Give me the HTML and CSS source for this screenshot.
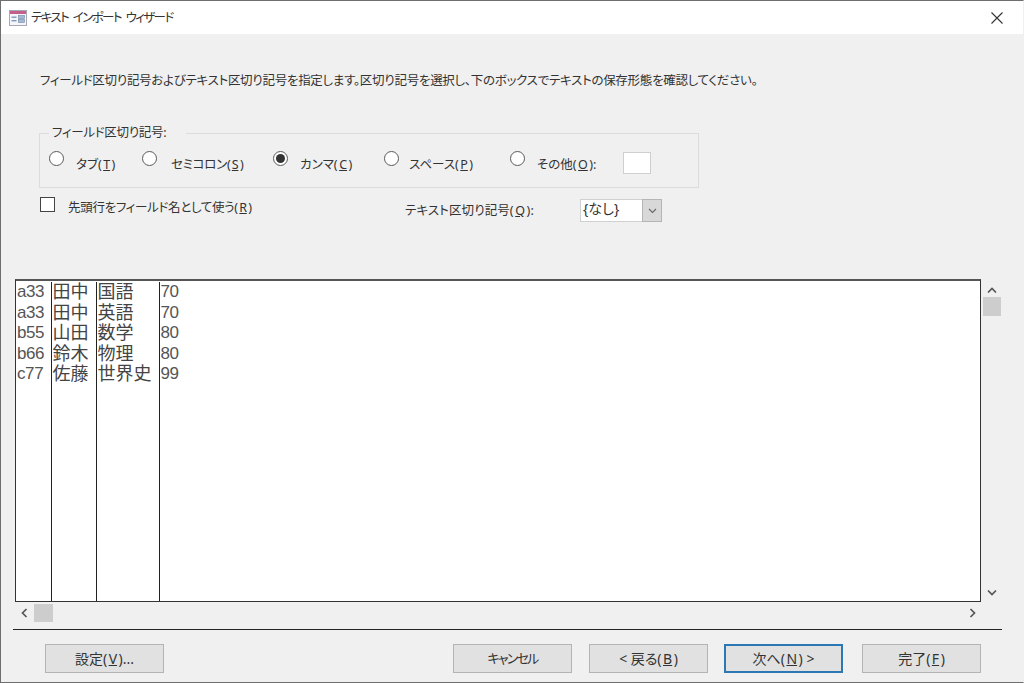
FILE: index.html
```html
<!DOCTYPE html>
<html lang="ja">
<head>
<meta charset="utf-8">
<title>テキスト インポート ウィザード</title>
<link rel="stylesheet" href="styles.css">
</head>
<body>
<div class="window">
  <header class="titlebar">
    <svg class="app-icon" width="18" height="16" viewBox="0 0 18 16">
      <rect x="0.5" y="0.5" width="17" height="15" fill="#f4f6fa" stroke="#a8a8b4"/>
      <rect x="1" y="1" width="16" height="3" fill="#c4608c"/>
      <rect x="2.5" y="6.5" width="5" height="1.4" fill="#7f9ab8"/>
      <rect x="2.5" y="10" width="5" height="1.4" fill="#7f9ab8"/>
      <rect x="9.5" y="5.5" width="6" height="3" fill="#a4bad4" stroke="#6f8aa8" stroke-width="0.6"/>
      <rect x="9.5" y="9.5" width="6" height="3" fill="#a4bad4" stroke="#6f8aa8" stroke-width="0.6"/>
    </svg>
    <span class="title">テキスト インポート ウィザード</span>
    <svg class="close" width="12" height="12" viewBox="0 0 12 12"><path d="M0.5 0.5L11.5 11.5M11.5 0.5L0.5 11.5" stroke="#333" stroke-width="1.1" fill="none"/></svg>
  </header>

  <main class="body">
    <p class="intro">フィールド区切り記号およびテキスト区切り記号を指定します。区切り記号を選択し、下のボックスでテキストの保存形態を確認してください。</p>

    <fieldset class="group">
      <legend>フィールド区切り記号:</legend>
      <div class="radios">
        <div class="radio-item"><span class="radio"></span><span class="label">タブ(<u>T</u>)</span></div>
        <div class="radio-item wide"><span class="radio"></span><span class="label narrow">セミコロン(<u>S</u>)</span></div>
        <div class="radio-item"><span class="radio on"></span><span class="label">カンマ(<u>C</u>)</span></div>
        <div class="radio-item tight"><span class="radio"></span><span class="label">スペース(<u>P</u>)</span></div>
        <div class="radio-item"><span class="radio"></span><span class="label">その他(<u>O</u>):</span></div>
        <div class="other-box"></div>
      </div>
    </fieldset>

    <div class="options">
      <div class="check-item"><span class="checkbox"></span><span class="label narrow">先頭行をフィールド名として使う(<u>R</u>)</span></div>
      <div class="qualifier">
        <span class="qualifier-label">テキスト区切り記号(<u>Q</u>):</span>
        <div class="combo">
          <span class="combo-value">{なし}</span>
          <span class="combo-btn"><svg width="9" height="6" viewBox="0 0 9 6"><path d="M1 1L4.5 4.5L8 1" stroke="#666" stroke-width="1.1" fill="none"/></svg></span>
        </div>
      </div>
    </div>

    <div class="preview-row">
      <div class="preview">
        <table class="data">
          <tr><td class="c1">a33</td><td class="c2">田中</td><td class="c3">国語</td><td class="c4">70</td></tr>
          <tr><td class="c1">a33</td><td class="c2">田中</td><td class="c3">英語</td><td class="c4">70</td></tr>
          <tr><td class="c1">b55</td><td class="c2">山田</td><td class="c3">数学</td><td class="c4">80</td></tr>
          <tr><td class="c1">b66</td><td class="c2">鈴木</td><td class="c3">物理</td><td class="c4">80</td></tr>
          <tr><td class="c1">c77</td><td class="c2">佐藤</td><td class="c3">世界史</td><td class="c4">99</td></tr>
          <tr class="filler"><td></td><td></td><td></td><td></td></tr>
        </table>
      </div>
      <div class="vscroll">
        <svg class="arrow-up" width="10" height="7" viewBox="0 0 10 7"><path d="M1 5.5L5 1.5L9 5.5" stroke="#555" stroke-width="1.7" fill="none"/></svg>
        <span class="vthumb"></span>
        <svg class="arrow-down" width="10" height="7" viewBox="0 0 10 7"><path d="M1 1.5L5 5.5L9 1.5" stroke="#555" stroke-width="1.7" fill="none"/></svg>
      </div>
    </div>

    <div class="hscroll">
      <svg class="arrow-left" width="7" height="10" viewBox="0 0 7 10"><path d="M5.5 1L1.5 5L5.5 9" stroke="#555" stroke-width="1.7" fill="none"/></svg>
      <span class="hthumb"></span>
      <svg class="arrow-right" width="7" height="10" viewBox="0 0 7 10"><path d="M1.5 1L5.5 5L1.5 9" stroke="#555" stroke-width="1.7" fill="none"/></svg>
    </div>

    <hr class="rule">

    <footer class="buttons">
      <button class="btn advanced">設定(<u>V</u>)...</button>
      <button class="btn cancel">キャンセル</button>
      <button class="btn back">&lt; 戻る(<u>B</u>)</button>
      <button class="btn next default">次へ(<u>N</u>) &gt;</button>
      <button class="btn finish">完了(<u>F</u>)</button>
    </footer>
  </main>
</div>
</body>
</html>
```

FILE: styles.css
```css
* { box-sizing: border-box; }

html, body { margin: 0; padding: 0; }

body {
  width: 1024px;
  height: 683px;
  overflow: hidden;
  background: #f0f0f0;
  font-family: "Noto Sans", "Noto Sans CJK JP", sans-serif;
  font-size: 12.5px;
  color: #333;
  font-feature-settings: "palt";
}

u { margin: 0 1.5px; }

.window {
  width: 1024px;
  height: 683px;
  border: 1px solid #6e6e6e;
  border-right-color: #f0f0f0;
  display: flex;
  flex-direction: column;
  background: #f0f0f0;
}

.titlebar {
  height: 33px;
  flex: none;
  background: #fff;
  display: flex;
  align-items: center;
  padding: 0 20px 0 8px;
}

.app-icon { flex: none; margin-right: 4px; }

.title { font-size: 12.5px; line-height: 18px; letter-spacing: -1.6px; word-spacing: 3px; }

.close { margin-left: auto; }

.body { flex: 1; display: flex; flex-direction: column; }

.intro {
  margin: 37px 0 0 39px;
  line-height: 20px;
  letter-spacing: -0.28px;
  white-space: nowrap;
}

.group {
  margin: 34px 0 0 38px;
  width: 660px;
  height: 63px;
  border: 1px solid #dcdcdc;
  padding: 0 0 0 9px;
  min-width: 0;
}

.group legend {
  padding: 0 20px 0 3px;
  line-height: 16px;
  letter-spacing: -0.3px;
}

.radios {
  display: grid;
  grid-template-columns: 93px 131px 111px 126px 113px 28px;
  margin-top: 9px;
  height: 30px;
}

.radio-item { display: flex; gap: 12px; align-items: flex-start; }
.radio-item.wide { gap: 14px; }
.radio-item.tight { gap: 10px; }

.radio {
  flex: none;
  width: 15px;
  height: 15px;
  border: 1px solid #5a5a5a;
  border-radius: 50%;
  background: #fff;
  margin-top: 1px;
  position: relative;
}

.radio.on::after {
  content: "";
  position: absolute;
  inset: 2px;
  border-radius: 50%;
  background: #333;
}

.label { line-height: 20px; margin-top: 5px; white-space: nowrap; }

.label.narrow { letter-spacing: -0.3px; }

.other-box {
  width: 28px;
  height: 22px;
  margin-top: 2px;
  background: #fff;
  border: 1px solid #cfcfcf;
}

.options {
  display: flex;
  margin: 9px 0 0 39px;
  height: 25px;
}

.check-item { display: flex; gap: 13px; width: 365px; align-items: flex-start; }
.check-item .label { margin-top: 1px; }

.checkbox {
  flex: none;
  width: 15px;
  height: 15px;
  border: 1px solid #444;
  background: #fff;
}

.qualifier { display: flex; align-items: flex-start; }

.qualifier-label { width: 175px; line-height: 20px; margin-top: 4px; white-space: nowrap; letter-spacing: 0.1px; }

.combo {
  margin-top: 2px;
  width: 82px;
  height: 23px;
  display: flex;
  background: #fff;
  border: 1px solid #d0d0d0;
  border-right: 0;
}

.combo-value { flex: 1; line-height: 18px; padding-left: 2px; font-size: 14px; }

.combo-btn {
  width: 20px;
  background: #d8d8d8;
  border: 1px solid #b5b5b5;
  margin: -1px 0;
  display: flex;
  align-items: center;
  justify-content: center;
}

.preview-row {
  display: flex;
  margin: 57px 0 0 14px;
  gap: 2px;
  height: 323px;
}

.preview {
  width: 966px;
  height: 323px;
  padding-top: 1px;
  background: #fff;
  border: 1px solid #333;
  border-top: 2px solid #555;
  overflow: hidden;
}

.data {
  border-collapse: collapse;
  width: 100%;
  height: 100%;
  font-family: "Liberation Sans", "Noto Sans CJK JP", sans-serif;
  font-size: 18px;
  font-feature-settings: normal;
  color: #444;
  table-layout: fixed;
}

.data td {
  border-right: 1px solid #222;
  padding: 0 0 0 1px;
  height: 20.5px;
  line-height: 20.5px;
  white-space: nowrap;
  overflow: hidden;
}

.data .filler td { height: auto; }

.data .filler td:last-child { border-right: 0; }

.data .c1 { width: 35px; font-size: 17px; letter-spacing: -0.4px; color: #555; }
.data .c2 { width: 45px; }
.data .c3 { width: 63px; }
.data .c4 { width: auto; border-right: 0; font-size: 17px; letter-spacing: -0.4px; color: #555; }

.vscroll {
  width: 18px;
  display: flex;
  flex-direction: column;
  align-items: center;
  padding-top: 8px;
}

.vthumb { width: 18px; height: 19px; background: #cdcdcd; margin-top: 3px; }

.arrow-down { margin-top: auto; margin-bottom: 6px; }

.hscroll {
  display: flex;
  align-items: center;
  height: 18px;
  margin: 2px 0 0 20px;
  width: 955px;
}

.hthumb { width: 19px; height: 18px; background: #cdcdcd; margin-left: 6px; }

.arrow-right { margin-left: auto; }

.rule {
  margin: 7px 0 0 12px;
  width: 989px;
  height: 1px;
  border: 0;
  background: #222;
}

.buttons {
  display: flex;
  margin: 14px 0 0 44px;
}

.btn {
  width: 119px;
  height: 29px;
  padding: 0 0 2px;
  background: #e1e1e1;
  border: 1px solid #b4b4b4;
  font: inherit;
  font-size: 14px;
  font-feature-settings: "palt";
  color: #333;
}

.btn.cancel { margin-left: 289px; font-size: 13px; letter-spacing: -1.8px; }
.btn.back { margin-left: 17px; }
.btn.next { margin-left: 16px; }
.btn.finish { margin-left: 19px; }

.btn.default { border: 2px solid #2b78b4; }
```
